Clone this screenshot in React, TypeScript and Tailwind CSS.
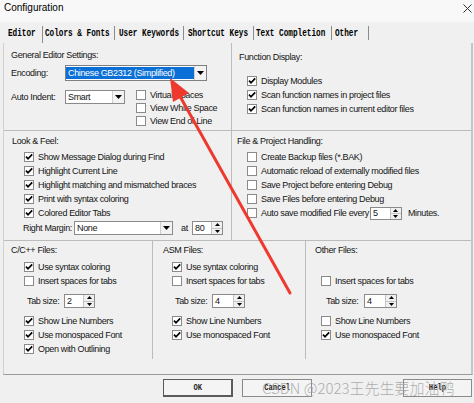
import React from "react";

const Check = ({ checked }: { checked?: boolean }) => (
  <span className="w-[10px] h-[10px] shrink-0 bg-white border border-[#8a8a8a] flex items-center justify-center">
    {checked && (
      <svg width="8" height="8" viewBox="0 0 8 8">
        <path d="M1 3.6 L3 5.8 L7.2 1.4" fill="none" stroke="#000" strokeWidth="1.7" />
      </svg>
    )}
  </span>
);

const Row = ({ label, checked }: { label: string; checked?: boolean }) => (
  <div className="flex items-center h-[14px]">
    <Check checked={checked} />
    <span className="ml-[4px] whitespace-nowrap">{label}</span>
  </div>
);

const Tri = () => (
  <svg width="7" height="4" viewBox="0 0 7 4">
    <path d="M0 0 H7 L3.5 4 Z" fill="#000" />
  </svg>
);

const DropBtn = () => (
  <div className="w-[12px] shrink-0 border-l border-[#cfcfcf] bg-[#f3f3f3] flex items-center justify-center">
    <Tri />
  </div>
);

const Spin = ({ value, cls }: { value: string; cls: string }) => (
  <div className={cls + " bg-white border border-[#8a8a8a] flex shrink-0"}>
    <span className="flex-1 pl-[2px] flex items-center">{value}</span>
    <div className="w-[11px] flex flex-col border-l border-[#c4c4c4] bg-[#f0f0f0]">
      <div className="flex-1 flex items-center justify-center border-b border-[#c4c4c4]">
        <svg width="5" height="3" viewBox="0 0 5 3">
          <path d="M0 3 L2.5 0 L5 3 Z" fill="#000" />
        </svg>
      </div>
      <div className="flex-1 flex items-center justify-center">
        <svg width="5" height="3" viewBox="0 0 5 3">
          <path d="M0 0 L5 0 L2.5 3 Z" fill="#000" />
        </svg>
      </div>
    </div>
  </div>
);

const mono =
  "inline-block whitespace-nowrap origin-left scale-x-[0.733] font-['Liberation_Mono',monospace] text-[10.5px] leading-[12px] text-black tracking-normal";

const btnText =
  "inline-block origin-center scale-x-[0.75] font-['Liberation_Mono',monospace] font-bold text-[9.5px] leading-[12px] text-[#222] tracking-normal";

export default function App() {
  return (
    <div className="relative w-[474px] h-[403px] overflow-hidden bg-[#f0f0f0] font-['Liberation_Sans',Arial,sans-serif] text-[9px] tracking-[-0.35px] leading-[12px] text-[#141414]">
      {/* title bar */}
      <div className="h-[22px] bg-[#f8f8f8] flex items-start justify-between pl-[4px] pr-[2px] pt-[2px]">
        <span className="text-[10px] leading-[12px] tracking-normal text-black">Configuration</span>
        <svg className="mt-[2px]" width="9" height="9" viewBox="0 0 9 9">
          <path d="M0.5 0.5 L8.5 8.5 M8.5 0.5 L0.5 8.5" stroke="#333" strokeWidth="1" />
        </svg>
      </div>

      {/* tabs */}
      <div className="h-[21px] flex items-end pl-[4px]">
        <div className="w-[39px] h-[17px] border-r border-[#8c8c8c] pl-[4px] pt-[1px]">
          <span className={mono + " font-bold"}>Editor</span>
        </div>
        <div className="w-[72px] h-[14px] mb-[3px] border-r border-[#8c8c8c] pl-[2px] flex items-center">
          <span className={mono + " font-bold"}>Colors &amp; Fonts</span>
        </div>
        <div className="w-[69px] h-[14px] mb-[3px] border-r border-[#8c8c8c] pl-[4px] flex items-center">
          <span className={mono + " font-bold"}>User Keywords</span>
        </div>
        <div className="w-[70px] h-[14px] mb-[3px] border-r border-[#8c8c8c] pl-[4px] flex items-center">
          <span className={mono + " font-bold"}>Shortcut Keys</span>
        </div>
        <div className="w-[78px] h-[14px] mb-[3px] border-r border-[#8c8c8c] pl-[2px] flex items-center">
          <span className={mono + " font-bold"}>Text Completion</span>
        </div>
        <div className="w-[37px] h-[14px] mb-[3px] border-r border-[#8c8c8c] pl-[3px] flex items-center">
          <span className={mono + " font-bold"}>Other</span>
        </div>
      </div>

      {/* panel */}
      <div className="ml-[3px] w-[470px] h-[332px] border-l border-b border-r-2 border-l-[#d0d0d0] border-b-[#9a9a9a] border-r-[#c6c6c6] flex flex-col">
        {/* row 1 */}
        <div className="h-[88px] flex border-b border-[#bcbcbc]">
          <div className="w-[228px] border-r border-[#bcbcbc] pl-[7px] pt-[6px]">
            <div>General Editor Settings:</div>
            <div className="mt-[4px] flex items-center h-[16px]">
              <span className="w-[54px]">Encoding:</span>
              <div className="w-[142px] h-[16px] bg-white border border-[#7f7f7f] flex">
                <div className="flex-1 my-[1px] bg-[#0a6fd6] text-white pl-[2px] flex items-center whitespace-nowrap">
                  Chinese GB2312 (Simplified)
                </div>
                <DropBtn />
              </div>
            </div>
            <div className="mt-[7px] flex items-start">
              <span className="w-[54px] mt-[3px] whitespace-nowrap">Auto Indent:</span>
              <div className="mt-[2px] w-[60px] h-[14px] bg-white border border-[#8a8a8a] flex">
                <span className="flex-1 pl-[2px] flex items-center">Smart</span>
                <DropBtn />
              </div>
              <div className="ml-[11px] flex flex-col">
                <div className="flex items-center h-[13px]">
                  <Check />
                  <span className="ml-[4px] whitespace-nowrap">Virtual Spaces</span>
                </div>
                <div className="flex items-center h-[13px]">
                  <Check />
                  <span className="ml-[4px] whitespace-nowrap">View White Space</span>
                </div>
                <div className="flex items-center h-[13px]">
                  <Check />
                  <span className="ml-[4px] whitespace-nowrap">View End of Line</span>
                </div>
              </div>
            </div>
          </div>
          <div className="flex-1 pt-[8px]">
            <div className="pl-[7px]">Function Display:</div>
            <div className="mt-[11px] pl-[15px]">
              <Row label="Display Modules" checked />
              <Row label="Scan function names in project files" checked />
              <Row label="Scan function names in current editor files" checked />
            </div>
          </div>
        </div>

        {/* row 2 */}
        <div className="h-[110px] flex border-b border-[#bcbcbc]">
          <div className="w-[228px] border-r border-[#bcbcbc] pt-[4px]">
            <div className="pl-[8px]">Look &amp; Feel:</div>
            <div className="mt-[3px] pl-[20px]">
              <Row label="Show Message Dialog during Find" checked />
              <Row label="Highlight Current Line" checked />
              <Row label="Highlight matching and mismatched braces" checked />
              <Row label="Print with syntax coloring" checked />
              <Row label="Colored Editor Tabs" checked />
            </div>
            <div className="mt-[1px] pl-[19px] h-[14px] flex items-center">
              <span className="w-[51px] whitespace-nowrap">Right Margin:</span>
              <div className="w-[99px] h-[14px] bg-white border border-[#8a8a8a] flex">
                <span className="flex-1 pl-[2px] flex items-center">None</span>
                <DropBtn />
              </div>
              <span className="ml-[8px] w-[11px]">at</span>
              <Spin value="80" cls="w-[31px] h-[14px]" />
            </div>
          </div>
          <div className="flex-1 pt-[4px]">
            <div className="pl-[5px]">File &amp; Project Handling:</div>
            <div className="mt-[3px] pl-[15px]">
              <Row label="Create Backup files (*.BAK)" />
              <Row label="Automatic reload of externally modified files" />
              <Row label="Save Project before entering Debug" />
              <Row label="Save Files before entering Debug" />
              <div className="flex items-center h-[14px]">
                <Check />
                <span className="ml-[4px] whitespace-nowrap">Auto save modified File every</span>
                <Spin value="5" cls="ml-[1px] w-[32px] h-[13px]" />
                <span className="ml-[6px]">Minutes.</span>
              </div>
            </div>
          </div>
        </div>

        {/* row 3 */}
        <div className="flex">
          <div className="w-[149px] h-[118px] border-r border-[#bcbcbc] pt-[3px]">
            <div className="pl-[7px]">C/C++ Files:</div>
            <div className="mt-[4px] pl-[20px]">
              <Row label="Use syntax coloring" checked />
              <Row label="Insert spaces for tabs" />
            </div>
            <div className="mt-[6px] pl-[23px] h-[14px] flex items-center">
              <span className="w-[37px] whitespace-nowrap">Tab size:</span>
              <Spin value="2" cls="w-[31px] h-[14px]" />
            </div>
            <div className="mt-[6px] pl-[20px]">
              <Row label="Show Line Numbers" checked />
              <Row label="Use monospaced Font" checked />
              <Row label="Open with Outlining" checked />
            </div>
          </div>
          <div className="w-[153px] h-[118px] border-r border-[#bcbcbc] pt-[3px]">
            <div className="pl-[10px]">ASM Files:</div>
            <div className="mt-[4px] pl-[19px]">
              <Row label="Use syntax coloring" checked />
              <Row label="Insert spaces for tabs" />
            </div>
            <div className="mt-[6px] pl-[22px] h-[14px] flex items-center">
              <span className="w-[37px] whitespace-nowrap">Tab size:</span>
              <Spin value="4" cls="w-[33px] h-[14px]" />
            </div>
            <div className="mt-[6px] pl-[19px]">
              <Row label="Show Line Numbers" checked />
              <Row label="Use monospaced Font" checked />
            </div>
          </div>
          <div className="flex-1 h-[118px] pt-[3px]">
            <div className="pl-[9px]">Other Files:</div>
            <div className="mt-[4px] pl-[15px]">
              <div className="h-[14px]" />
              <Row label="Insert spaces for tabs" />
            </div>
            <div className="mt-[6px] pl-[20px] h-[14px] flex items-center">
              <span className="w-[38px] whitespace-nowrap">Tab size:</span>
              <Spin value="4" cls="w-[33px] h-[14px]" />
            </div>
            <div className="mt-[6px] pl-[15px]">
              <Row label="Show Line Numbers" />
              <Row label="Use monospaced Font" checked />
            </div>
          </div>
        </div>
      </div>

      {/* buttons */}
      <div className="mt-[4px] flex">
        <div className="ml-[163px] w-[70px] h-[18px] bg-[#f4f4f4] border border-[#5a5a5a] border-b-2 border-r-2 flex items-center justify-center">
          <span className={btnText}>OK</span>
        </div>
        <div className="ml-[9px] w-[70px] h-[18px] bg-[#f4f4f4] border border-[#8a8a8a] flex items-center justify-center">
          <span className={btnText}>Cancel</span>
        </div>
        <div className="ml-[91px] w-[69px] h-[18px] bg-[#f4f4f4] border border-[#8a8a8a] flex items-center justify-center">
          <span className={btnText}>Help</span>
        </div>
      </div>

      {/* watermark */}
      <div className="absolute left-[262px] top-[378px] whitespace-nowrap text-[15px] leading-[20px] tracking-normal font-['Noto_Sans_CJK_SC','Noto_Sans',sans-serif] font-light text-[#9a9a9a]/80">
        CSDN @2023王先生要加油鸭
      </div>

      {/* red annotation arrow */}
      <svg className="absolute left-0 top-0 pointer-events-none" width="474" height="403" viewBox="0 0 474 403">
        <line x1="290" y1="293" x2="177" y2="91" stroke="#ee3a2e" strokeWidth="3" strokeLinecap="round" />
        <path d="M170 78 L189 93 L173 102 Z" fill="#ee3a2e" />
      </svg>
    </div>
  );
}
